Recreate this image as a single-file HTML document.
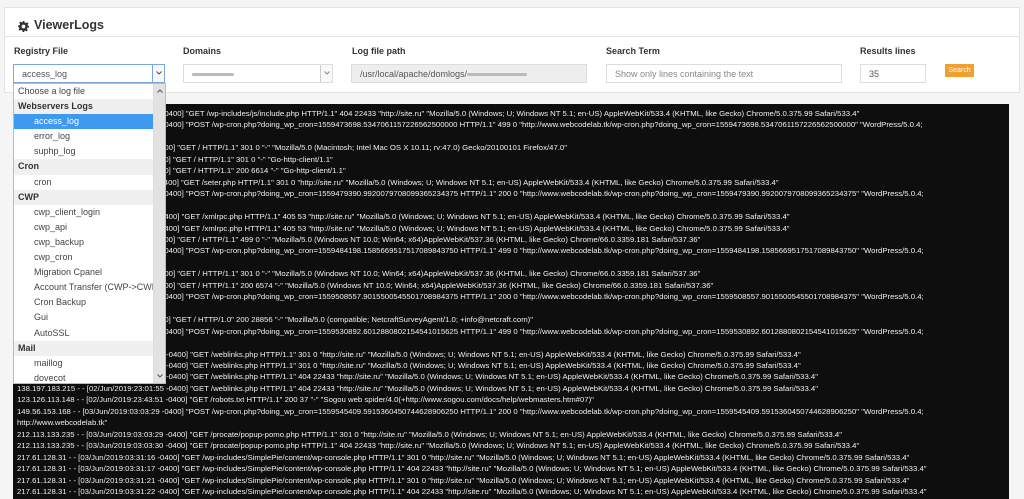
<!DOCTYPE html>
<html><head><meta charset="utf-8"><style>
*{box-sizing:border-box;margin:0;padding:0}
body{width:1024px;height:491px;overflow:hidden;background:#f5f5f5;font-family:"Liberation Sans",sans-serif;position:relative;color:#333}
.card{position:absolute;left:4px;top:7px;width:1016px;height:86px;background:#fff;border:1px solid #e3e3e3}
.hdr{position:absolute;left:0;top:0;width:100%;height:29px;border-bottom:1px solid #e3e3e3}
.hdr span{position:absolute;left:29px;top:10px;font-weight:bold;font-size:12.5px;color:#333}
.hdr svg{position:absolute;left:13px;top:13px}
.lbl{position:absolute;top:46px;font-size:9px;font-weight:bold;color:#333}
.inp{position:absolute;top:64px;height:19px;border:1px solid #ddd;background:#fff;font-size:9px;color:#555;padding:4px 8px;white-space:nowrap;overflow:hidden}
.blur{display:inline-block;height:3px;background:#bbb;border-radius:2px;vertical-align:middle}
.arr{position:absolute;right:0;top:0;width:12px;height:17px;border-left:1px solid #ccc;background:#f8f8f8;text-align:center;color:#666}
.arr svg{margin-top:6px}
.btn{position:absolute;left:945px;top:64px;width:29px;height:13px;background:#f0a030;color:#fff;font-size:7px;text-align:center;line-height:13px}
.log{position:absolute;left:13px;top:104px;width:996px;height:395px;background:#0e0e0e;color:#f0f0f0;font-size:7.75px;line-height:11.45px;padding:4px 4px;white-space:pre;overflow:hidden}
.dd{position:absolute;left:13px;top:83px;width:153px;height:301px;background:#fff;border:1px solid #bbb;font-size:9px;color:#444;overflow:hidden}
.dd .r{height:15.1px;line-height:15px;padding-left:20px;white-space:nowrap;width:140px;overflow:hidden}
.dd .g{padding-left:4px;font-weight:bold;background:#f0f0f0;color:#333}
.dd .c{padding-left:4px}
.dd .s{background:#3f99ee;color:#fff}
.sb{position:absolute;right:0;top:0;width:12px;height:100%;background:#e2e2e2;border-left:1px solid #ddd}
.sb svg{position:absolute;left:3px}
</style></head><body>
<div class="card">
 <div class="hdr"><svg width="11" height="11" viewBox="0 0 12 12"><path fill="#333" d="M5 0h2l.3 1.7 1.3.6 1.4-1 1.4 1.4-1 1.4.6 1.3L12 5v2l-1.7.3-.6 1.3 1 1.4-1.4 1.4-1.4-1-1.3.6L7 12H5l-.3-1.7-1.3-.6-1.4 1L.6 9.3l1-1.4L1 6.6 0 7V5l1.7-.3.6-1.3-1-1.4L2.7.6l1.4 1 1.3-.6z"/><circle cx="6" cy="6" r="2" fill="#fff"/></svg><span>ViewerLogs</span></div>
</div>
<div class="lbl" style="left:14px">Registry File</div>
<div class="lbl" style="left:183px">Domains</div>
<div class="lbl" style="left:352px">Log file path</div>
<div class="lbl" style="left:606px">Search Term</div>
<div class="lbl" style="left:860px">Results lines</div>
<div class="inp" style="left:13px;width:152px;border-color:#7aa7d8">access_log<div class="arr" style="border-color:#7aa7d8"><svg width="6" height="4" viewBox="0 0 6 4"><path d="M.5.5 3 3 5.5.5" fill="none" stroke="#555"/></svg></div></div>
<div class="inp" style="left:183px;width:150px"><span class="blur" style="width:42px"></span><div class="arr"><svg width="6" height="4" viewBox="0 0 6 4"><path d="M.5.5 3 3 5.5.5" fill="none" stroke="#888"/></svg></div></div>
<div class="inp" style="left:351px;width:236px;background:#eee">/usr/local/apache/domlogs/<span class="blur" style="width:60px"></span></div>
<div class="inp" style="left:606px;width:236px;color:#888">Show only lines containing the text</div>
<div class="inp" style="left:860px;width:66px">35</div>
<div class="btn">Search</div>
<div class="log">185.234.218.42 - - [02/Jun/2019:07:23:10 -0400] "GET /wp-includes/js/include.php HTTP/1.1" 404 22433 "http://site.ru" "Mozilla/5.0 (Windows; U; Windows NT 5.1; en-US) AppleWebKit/533.4 (KHTML, like Gecko) Chrome/5.0.375.99 Safari/533.4"
149.56.153.168 - - [02/Jun/2019:07:01:38 -0400] "POST /wp-cron.php?doing_wp_cron=1559473698.5347061157226562500000 HTTP/1.1" 499 0 "http://www.webcodelab.tk/wp-cron.php?doing_wp_cron=1559473698.5347061157226562500000" "WordPress/5.0.4;
http://www.webcodelab.tk"
66.249.66.12 - - [02/Jun/2019:08:12:44 -0400] "GET / HTTP/1.1" 301 0 "-" "Mozilla/5.0 (Macintosh; Intel Mac OS X 10.11; rv:47.0) Gecko/20100101 Firefox/47.0"
35.187.10.2 - - [02/Jun/2019:08:31:01 -0400] "GET / HTTP/1.1" 301 0 "-" "Go-http-client/1.1"
35.187.10.2 - - [02/Jun/2019:08:31:02 -0400] "GET / HTTP/1.1" 200 6614 "-" "Go-http-client/1.1"
185.234.218.4 - - [02/Jun/2019:08:40:11 -0400] "GET /seter.php HTTP/1.1" 301 0 "http://site.ru" "Mozilla/5.0 (Windows; U; Windows NT 5.1; en-US) AppleWebKit/533.4 (KHTML, like Gecko) Chrome/5.0.375.99 Safari/533.4"
149.56.153.168 - - [02/Jun/2019:08:49:50 -0400] "POST /wp-cron.php?doing_wp_cron=1559479390.9920079708099365234375 HTTP/1.1" 200 0 "http://www.webcodelab.tk/wp-cron.php?doing_wp_cron=1559479390.9920079708099365234375" "WordPress/5.0.4;
http://www.webcodelab.tk"
185.234.218.4 - - [02/Jun/2019:10:03:40 -0400] "GET /xmlrpc.php HTTP/1.1" 405 53 "http://site.ru" "Mozilla/5.0 (Windows; U; Windows NT 5.1; en-US) AppleWebKit/533.4 (KHTML, like Gecko) Chrome/5.0.375.99 Safari/533.4"
185.234.218.4 - - [02/Jun/2019:10:03:41 -0400] "GET /xmlrpc.php HTTP/1.1" 405 53 "http://site.ru" "Mozilla/5.0 (Windows; U; Windows NT 5.1; en-US) AppleWebKit/533.4 (KHTML, like Gecko) Chrome/5.0.375.99 Safari/533.4"
104.248.1.20 - - [02/Jun/2019:10:10:00 -0400] "GET / HTTP/1.1" 499 0 "-" "Mozilla/5.0 (Windows NT 10.0; Win64; x64)AppleWebKit/537.36 (KHTML, like Gecko) Chrome/66.0.3359.181 Safari/537.36"
149.56.153.168 - - [02/Jun/2019:10:09:58 -0400] "POST /wp-cron.php?doing_wp_cron=1559484198.1585669517517089843750 HTTP/1.1" 499 0 "http://www.webcodelab.tk/wp-cron.php?doing_wp_cron=1559484198.1585669517517089843750" "WordPress/5.0.4;
http://www.webcodelab.tk"
104.248.1.20 - - [02/Jun/2019:16:40:00 -0400] "GET / HTTP/1.1" 301 0 "-" "Mozilla/5.0 (Windows NT 10.0; Win64; x64)AppleWebKit/537.36 (KHTML, like Gecko) Chrome/66.0.3359.181 Safari/537.36"
104.248.1.20 - - [02/Jun/2019:16:40:01 -0400] "GET / HTTP/1.1" 200 6574 "-" "Mozilla/5.0 (Windows NT 10.0; Win64; x64)AppleWebKit/537.36 (KHTML, like Gecko) Chrome/66.0.3359.181 Safari/537.36"
149.56.153.168 - - [02/Jun/2019:16:49:17 -0400] "POST /wp-cron.php?doing_wp_cron=1559508557.9015500545501708984375 HTTP/1.1" 200 0 "http://www.webcodelab.tk/wp-cron.php?doing_wp_cron=1559508557.9015500545501708984375" "WordPress/5.0.4;
http://www.webcodelab.tk"
89.36.212.1 - - [02/Jun/2019:22:50:23 -0400] "GET / HTTP/1.0" 200 28856 "-" "Mozilla/5.0 (compatible; NetcraftSurveyAgent/1.0; +info@netcraft.com)"
149.56.153.168 - - [02/Jun/2019:22:54:52 -0400] "POST /wp-cron.php?doing_wp_cron=1559530892.6012880802154541015625 HTTP/1.1" 499 0 "http://www.webcodelab.tk/wp-cron.php?doing_wp_cron=1559530892.6012880802154541015625" "WordPress/5.0.4;
http://www.webcodelab.tk"
138.197.183.215 - - [02/Jun/2019:23:01:48 -0400] "GET /weblinks.php HTTP/1.1" 301 0 "http://site.ru" "Mozilla/5.0 (Windows; U; Windows NT 5.1; en-US) AppleWebKit/533.4 (KHTML, like Gecko) Chrome/5.0.375.99 Safari/533.4"
138.197.183.215 - - [02/Jun/2019:23:01:54 -0400] "GET /weblinks.php HTTP/1.1" 301 0 "http://site.ru" "Mozilla/5.0 (Windows; U; Windows NT 5.1; en-US) AppleWebKit/533.4 (KHTML, like Gecko) Chrome/5.0.375.99 Safari/533.4"
138.197.183.215 - - [02/Jun/2019:23:01:54 -0400] "GET /weblinks.php HTTP/1.1" 404 22433 "http://site.ru" "Mozilla/5.0 (Windows; U; Windows NT 5.1; en-US) AppleWebKit/533.4 (KHTML, like Gecko) Chrome/5.0.375.99 Safari/533.4"
138.197.183.215 - - [02/Jun/2019:23:01:55 -0400] "GET /weblinks.php HTTP/1.1" 404 22433 "http://site.ru" "Mozilla/5.0 (Windows; U; Windows NT 5.1; en-US) AppleWebKit/533.4 (KHTML, like Gecko) Chrome/5.0.375.99 Safari/533.4"
123.126.113.148 - - [02/Jun/2019:23:43:51 -0400] "GET /robots.txt HTTP/1.1" 200 37 "-" "Sogou web spider/4.0(+http://www.sogou.com/docs/help/webmasters.htm#07)"
149.56.153.168 - - [03/Jun/2019:03:03:29 -0400] "POST /wp-cron.php?doing_wp_cron=1559545409.5915360450744628906250 HTTP/1.1" 200 0 "http://www.webcodelab.tk/wp-cron.php?doing_wp_cron=1559545409.5915360450744628906250" "WordPress/5.0.4;
http://www.webcodelab.tk"
212.113.133.235 - - [03/Jun/2019:03:03:29 -0400] "GET /procate/popup-pomo.php HTTP/1.1" 301 0 "http://site.ru" "Mozilla/5.0 (Windows; U; Windows NT 5.1; en-US) AppleWebKit/533.4 (KHTML, like Gecko) Chrome/5.0.375.99 Safari/533.4"
212.113.133.235 - - [03/Jun/2019:03:03:30 -0400] "GET /procate/popup-pomo.php HTTP/1.1" 404 22433 "http://site.ru" "Mozilla/5.0 (Windows; U; Windows NT 5.1; en-US) AppleWebKit/533.4 (KHTML, like Gecko) Chrome/5.0.375.99 Safari/533.4"
217.61.128.31 - - [03/Jun/2019:03:31:16 -0400] "GET /wp-includes/SimplePie/content/wp-console.php HTTP/1.1" 301 0 "http://site.ru" "Mozilla/5.0 (Windows; U; Windows NT 5.1; en-US) AppleWebKit/533.4 (KHTML, like Gecko) Chrome/5.0.375.99 Safari/533.4"
217.61.128.31 - - [03/Jun/2019:03:31:17 -0400] "GET /wp-includes/SimplePie/content/wp-console.php HTTP/1.1" 404 22433 "http://site.ru" "Mozilla/5.0 (Windows; U; Windows NT 5.1; en-US) AppleWebKit/533.4 (KHTML, like Gecko) Chrome/5.0.375.99 Safari/533.4"
217.61.128.31 - - [03/Jun/2019:03:31:21 -0400] "GET /wp-includes/SimplePie/content/wp-console.php HTTP/1.1" 301 0 "http://site.ru" "Mozilla/5.0 (Windows; U; Windows NT 5.1; en-US) AppleWebKit/533.4 (KHTML, like Gecko) Chrome/5.0.375.99 Safari/533.4"
217.61.128.31 - - [03/Jun/2019:03:31:22 -0400] "GET /wp-includes/SimplePie/content/wp-console.php HTTP/1.1" 404 22433 "http://site.ru" "Mozilla/5.0 (Windows; U; Windows NT 5.1; en-US) AppleWebKit/533.4 (KHTML, like Gecko) Chrome/5.0.375.99 Safari/533.4"</div>
<div class="dd">
 <div class="r c">Choose a log file</div>
 <div class="r g">Webservers Logs</div>
 <div class="r s">access_log</div>
 <div class="r">error_log</div>
 <div class="r">suphp_log</div>
 <div class="r g">Cron</div>
 <div class="r">cron</div>
 <div class="r g">CWP</div>
 <div class="r">cwp_client_login</div>
 <div class="r">cwp_api</div>
 <div class="r">cwp_backup</div>
 <div class="r">cwp_cron</div>
 <div class="r">Migration Cpanel</div>
 <div class="r">Account Transfer (CWP-&gt;CWP)</div>
 <div class="r">Cron Backup</div>
 <div class="r">Gui</div>
 <div class="r">AutoSSL</div>
 <div class="r g">Mail</div>
 <div class="r">maillog</div>
 <div class="r">dovecot</div>
 <div class="sb"><svg style="top:5px" width="6" height="4" viewBox="0 0 6 4"><path d="M.5 3.5 3 1 5.5 3.5" fill="none" stroke="#555"/></svg><svg style="bottom:5px" width="6" height="4" viewBox="0 0 6 4"><path d="M.5.5 3 3 5.5.5" fill="none" stroke="#555"/></svg></div>
</div>
</body></html>
